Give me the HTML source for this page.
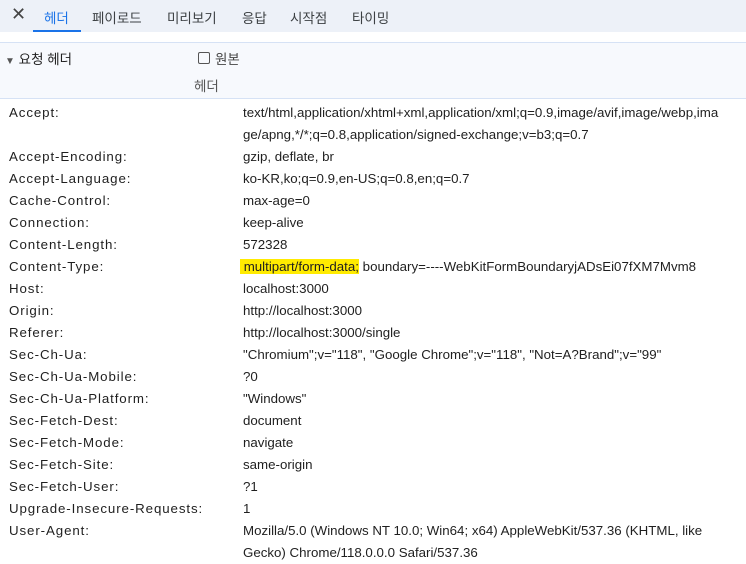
<!DOCTYPE html>
<html><head><meta charset="utf-8"><style>
body{margin:0;width:746px;height:559px;overflow:hidden;background:#fff;font-family:"Liberation Sans","Noto Sans CJK KR",sans-serif;font-size:13.3px;color:#1f1f1f}
.tabs{position:absolute;left:0;top:0;width:746px;height:32px;background:#edf1f8}
.tab{position:absolute;top:7px;font-size:13.5px;color:#3c4043}
.sec{position:absolute;left:0;top:42px;width:746px;height:55px;background:#f7f9fd;border-top:1px solid #d6e2f5;border-bottom:1px solid #d6e2f5}
.row{position:absolute;left:9px;height:22px;line-height:22px;white-space:nowrap;letter-spacing:0.9px}
.v{position:absolute;left:243px;white-space:nowrap;line-height:22px}
.hl{background:#ffeb00}
</style></head><body>
<div class="tabs">
<div class="tab" style="left:11px;top:4px;font-size:18px;color:#444">✕</div>
<div class="tab" style="left:44px;color:#1a73e8">헤더</div>
<div style="position:absolute;left:33px;top:30px;width:48px;height:2px;background:#1a73e8"></div>
<div class="tab" style="left:92px">페이로드</div>
<div class="tab" style="left:167px">미리보기</div>
<div class="tab" style="left:242px">응답</div>
<div class="tab" style="left:290px">시작점</div>
<div class="tab" style="left:352px">타이밍</div>
</div>
<div class="sec">
<div style="position:absolute;left:5px;top:5px;font-size:13.5px;color:#1f1f1f"><span style="font-size:10px;color:#555">▼</span> 요청 헤더</div>
<div style="position:absolute;left:198px;top:9px;width:10px;height:10px;border:1px solid #555;border-radius:2px"></div>
<div style="position:absolute;left:215px;top:5px;font-size:13.5px;color:#444">원본</div>
<div style="position:absolute;left:194px;top:32px;font-size:13.5px;color:#555">헤더</div>
</div>
<div class="row" style="top:102px">Accept:</div>
<div class="v" style="top:102px">text/html,application/xhtml+xml,application/xml;q=0.9,image/avif,image/webp,ima<br>ge/apng,*/*;q=0.8,application/signed-exchange;v=b3;q=0.7</div>
<div class="row" style="top:146px">Accept-Encoding:</div><div class="v" style="top:146px">gzip, deflate, br</div>
<div class="row" style="top:168px">Accept-Language:</div><div class="v" style="top:168px">ko-KR,ko;q=0.9,en-US;q=0.8,en;q=0.7</div>
<div class="row" style="top:190px">Cache-Control:</div><div class="v" style="top:190px">max-age=0</div>
<div class="row" style="top:212px">Connection:</div><div class="v" style="top:212px">keep-alive</div>
<div class="row" style="top:234px">Content-Length:</div><div class="v" style="top:234px">572328</div>
<div class="row" style="top:256px">Content-Type:</div><div class="v" style="top:256px;left:240px"><span class="hl">&nbsp;multipart/form-data;</span> boundary=----WebKitFormBoundaryjADsEi07fXM7Mvm8</div>
<div class="row" style="top:278px">Host:</div><div class="v" style="top:278px">localhost:3000</div>
<div class="row" style="top:300px">Origin:</div><div class="v" style="top:300px">http://localhost:3000</div>
<div class="row" style="top:322px">Referer:</div><div class="v" style="top:322px">http://localhost:3000/single</div>
<div class="row" style="top:344px">Sec-Ch-Ua:</div><div class="v" style="top:344px">"Chromium";v="118", "Google Chrome";v="118", "Not=A?Brand";v="99"</div>
<div class="row" style="top:366px">Sec-Ch-Ua-Mobile:</div><div class="v" style="top:366px">?0</div>
<div class="row" style="top:388px">Sec-Ch-Ua-Platform:</div><div class="v" style="top:388px">"Windows"</div>
<div class="row" style="top:410px">Sec-Fetch-Dest:</div><div class="v" style="top:410px">document</div>
<div class="row" style="top:432px">Sec-Fetch-Mode:</div><div class="v" style="top:432px">navigate</div>
<div class="row" style="top:454px">Sec-Fetch-Site:</div><div class="v" style="top:454px">same-origin</div>
<div class="row" style="top:476px">Sec-Fetch-User:</div><div class="v" style="top:476px">?1</div>
<div class="row" style="top:498px">Upgrade-Insecure-Requests:</div><div class="v" style="top:498px">1</div>
<div class="row" style="top:520px">User-Agent:</div><div class="v" style="top:520px">Mozilla/5.0 (Windows NT 10.0; Win64; x64) AppleWebKit/537.36 (KHTML, like<br>Gecko) Chrome/118.0.0.0 Safari/537.36</div>
</body></html>
